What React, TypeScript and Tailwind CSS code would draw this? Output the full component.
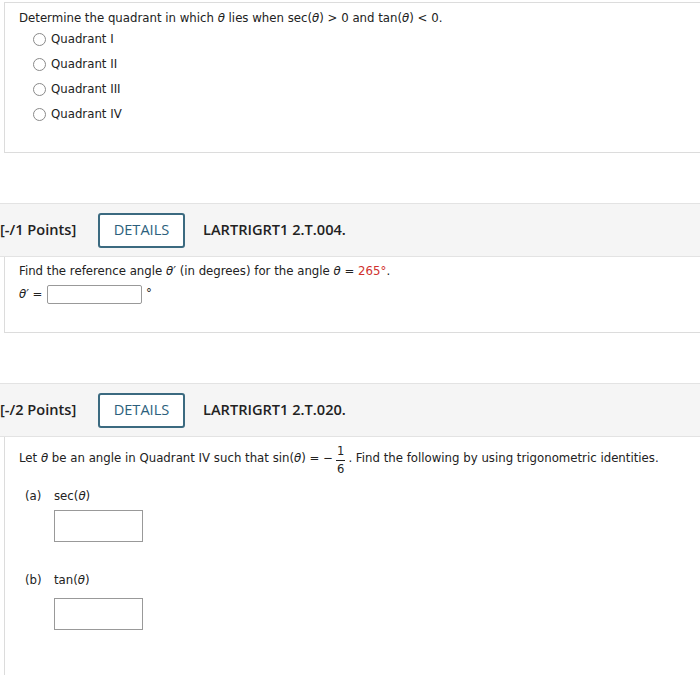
import React from "react";

const body = { fontFamily: '"DejaVu Sans", Verdana, sans-serif' };
const head = { fontFamily: '"Open Sans", "Noto Sans", sans-serif' };

function Th({ prime }: { prime?: boolean }) {
  return (
    <span className="italic">
      θ{prime ? "′" : ""}
    </span>
  );
}

function Radio({ label }: { label: string }) {
  return (
    <div className="flex items-center h-[25px]">
      <span className="w-[13px] h-[13px] rounded-full border border-[#8a8a8a] bg-white ml-[28px] mr-[5px]" />
      <span>{label}</span>
    </div>
  );
}

function Header({ points, code }: { points: string; code: string }) {
  return (
    <div
      className="h-[54px] bg-[#f5f5f5] border-t border-b border-[#e3e3e3] flex items-center text-[14.6px] text-[#222]"
      style={head}
    >
      <span className="font-semibold w-[98px]">[-/{points} Points]</span>
      <span className="h-[35px] w-[87px] border-2 border-[#3b6a80] rounded-[3px] bg-white flex items-center justify-center text-[#2c5f7c]">
        DETAILS
      </span>
      <span className="font-semibold ml-[18px]">{code}</span>
    </div>
  );
}

export default function App() {
  return (
    <div className="w-[700px] h-[675px] overflow-hidden bg-white text-[11.75px] text-[#222]" style={body}>
      <div className="mt-[2px] ml-[4px] h-[151px] border-t border-l border-b border-[#dcdcdc] pl-[14px] pt-[7px]">
        <div className="h-[17px] leading-[17px]">
          Determine the quadrant in which <Th /> lies when sec(<Th />) &gt; 0 and tan(<Th />) &lt; 0.
        </div>
        <div className="-ml-[14px]">
          <Radio label="Quadrant I" />
          <Radio label="Quadrant II" />
          <Radio label="Quadrant III" />
          <Radio label="Quadrant IV" />
        </div>
      </div>

      <div className="h-[50px]" />
      <Header points="1" code="LARTRIGRT1 2.T.004." />
      <div className="ml-[4px] h-[76px] border-l border-b border-[#dcdcdc] pl-[14px] pt-[6px]">
        <div className="h-[16px] leading-[16px]">
          Find the reference angle <Th prime /> (in degrees) for the angle <Th /> ={" "}
          <span className="text-[#d0312d]">265°</span>.
        </div>
        <div className="flex items-center mt-[6px] h-[19px]">
          <span className="w-[28px]">
            <Th prime /> =
          </span>
          <span className="w-[95px] h-[19px] border border-[#999] rounded-[2px] bg-white" />
          <span className="ml-[4px] -mt-[2px]">°</span>
        </div>
      </div>

      <div className="h-[50px]" />
      <Header points="2" code="LARTRIGRT1 2.T.020." />
      <div className="ml-[4px] h-[260px] border-l border-[#dcdcdc] pl-[14px] pt-[9px]">
        <div className="flex items-center h-[26px]">
          <span>
            Let <Th /> be an angle in Quadrant IV such that sin(<Th />) = −
          </span>
          <span className="inline-flex flex-col items-center mx-[3px] leading-[17px] mt-[2px]">
            <span className="text-[11.5px] px-[1px]">1</span>
            <span className="w-[9px] border-t border-[#222]" />
            <span className="text-[11.5px]">6</span>
          </span>
          <span>. Find the following by using trigonometric identities.</span>
        </div>
        <div className="pl-[6px] mt-[16px]">
          <div className="flex h-[16px] leading-[16px]">
            <span className="w-[29px]">(a)</span>
            <span>
              sec(<Th />)
            </span>
          </div>
          <div className="ml-[29px] mt-[6px] w-[89px] h-[32px] border border-[#999] bg-white" />
          <div className="flex h-[16px] leading-[16px] mt-[30px]">
            <span className="w-[29px]">(b)</span>
            <span>
              tan(<Th />)
            </span>
          </div>
          <div className="ml-[29px] mt-[10px] w-[89px] h-[32px] border border-[#999] bg-white" />
        </div>
      </div>
    </div>
  );
}
